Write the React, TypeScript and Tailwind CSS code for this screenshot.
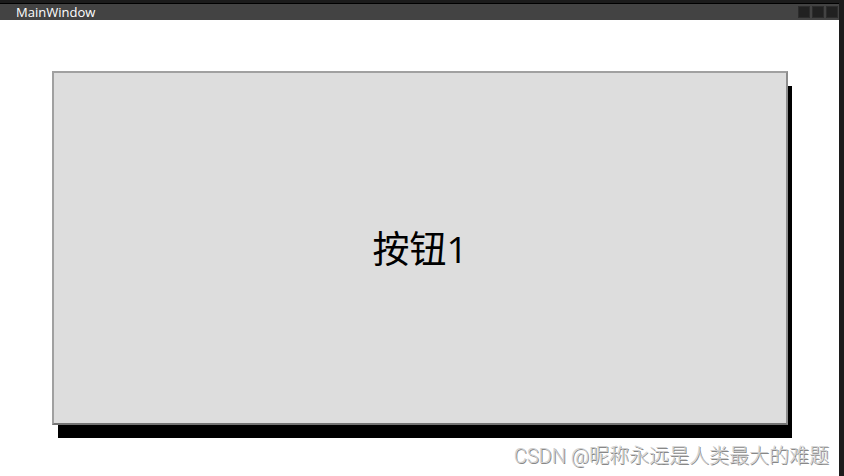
const windowButtons = ["Minimize", "Maximize", "Close"];

function TitleBar() {
  return (
    <header className="flex h-4 shrink-0 items-center justify-between bg-[#434343] pl-4 pr-px">
      <h1 className="text-[13px] leading-4 text-white">MainWindow</h1>
      <div className="flex gap-0.5">
        {windowButtons.map((label) => (
          <button
            key={label}
            type="button"
            aria-label={label}
            className="size-3 border border-[#2c2c2c] bg-[#212121]"
          />
        ))}
      </div>
    </header>
  );
}

export default function App() {
  return (
    <div className="flex min-h-screen flex-col bg-[#1c1c1c] pr-[5px] pt-[3px] font-['Open_Sans','Noto_Sans_CJK_SC',sans-serif]">
      <div className="relative flex grow flex-col border-t border-black bg-white">
        <TitleBar />
        <main className="flex grow py-[51px] pl-[52px] pr-[51px]">
          <button
            type="button"
            className="grow border-2 border-[#a0a0a0] border-r-[#8c8c8c] border-b-[#747474] bg-[#dddddd] pt-0.5 text-[37px] text-black shadow-[5px_14px_0_-1px_#000000]"
          >
            按钮1
          </button>
        </main>
        <p className="absolute bottom-1 right-2.5 font-['Roboto','Noto_Sans_CJK_SC',sans-serif] text-xl font-light leading-8 text-[#d0d0d0] [text-shadow:1px_1px_0_#888888]">
          CSDN @昵称永远是人类最大的难题
        </p>
      </div>
    </div>
  );
}
